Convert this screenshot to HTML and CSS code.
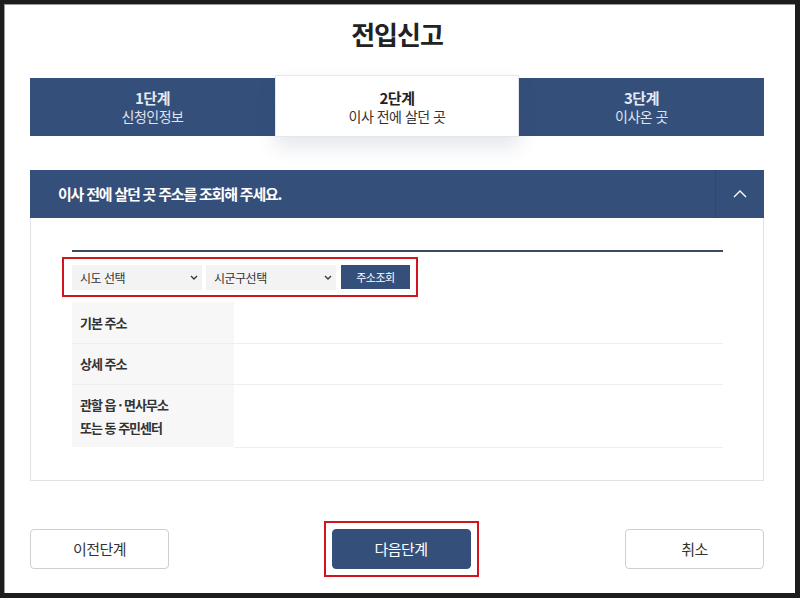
FILE: index.html
```html
<!DOCTYPE html>
<html lang="ko">
  <head>
    <meta charset="UTF-8" />
    <meta name="viewport" content="width=device-width, initial-scale=1.0" />
    <title>전입신고</title>
    <link rel="stylesheet" href="styles.css">
  </head>
  <body>
    <div class="modal">
      <h1 class="title">전입신고</h1>

      <ol class="steps">
        <li class="step">
          <strong>1단계</strong>
          <span>신청인정보</span>
        </li>
        <li class="step active">
          <strong>2단계</strong>
          <span>이사 전에 살던 곳</span>
        </li>
        <li class="step">
          <strong>3단계</strong>
          <span>이사온 곳</span>
        </li>
      </ol>

      <div class="panel">
        <div class="panel-head">
          <h2>이사 전에 살던 곳 주소를 조회해 주세요.</h2>
          <button class="toggle" aria-label="접기">
            <svg width="14" height="8" viewBox="0 0 14 8"><path d="M1 7 L7 1 L13 7" fill="none" stroke="#fff" stroke-width="1.4"/></svg>
          </button>
        </div>
        <div class="panel-body">
          <div class="search-row">
            <div class="select">
              <span>시도 선택</span>
              <svg width="8" height="5" viewBox="0 0 8 5"><path d="M1 1 L4 4 L7 1" fill="none" stroke="#333" stroke-width="1.3"/></svg>
            </div>
            <div class="select">
              <span>시군구선택</span>
              <svg width="8" height="5" viewBox="0 0 8 5"><path d="M1 1 L4 4 L7 1" fill="none" stroke="#333" stroke-width="1.3"/></svg>
            </div>
            <button class="search-btn">주소조회</button>
          </div>

          <table class="addr">
            <tr class="r1">
              <th>기본 주소</th>
              <td></td>
            </tr>
            <tr class="r2">
              <th>상세 주소</th>
              <td></td>
            </tr>
            <tr class="r3">
              <th>관할 읍 · 면사무소<br>또는 동 주민센터</th>
              <td></td>
            </tr>
          </table>
        </div>
      </div>

      <div class="footer">
        <button class="btn">이전단계</button>
        <div class="mark">
          <button class="btn primary">다음단계</button>
        </div>
        <button class="btn">취소</button>
      </div>
    </div>
  </body>
</html>
```

FILE: styles.css
```css
body {
    margin: 0;
    background-color: #1d1d1d;
    font-family: "Noto Sans CJK KR", "Noto Sans", sans-serif;
    color: #333;
}
.modal {
    box-sizing: border-box;
    width: 791px;
    height: 589px;
    margin: 4px 0 0 4px;
    padding: 0 31px 0 25px;
    background-color: #fff;
    border-left: 1px solid #9a9a9a;
    border-top: 1px solid #9a9a9a;
}
.title {
    margin: 0;
    padding-top: 13px;
    height: 58px;
    box-sizing: border-box;
    text-align: center;
    font-size: 26px;
    font-weight: 700;
    color: #222;
    line-height: 32px;
    letter-spacing: -1px;
}
.steps {
    list-style: none;
    margin: 15px 0 0;
    padding: 0;
    display: grid;
    grid-template-columns: 245px 244px 245px;
    height: 58px;
}
.step {
    background-color: #354f7b;
    color: #dfe4ee;
    display: flex;
    flex-direction: column;
    align-items: center;
    justify-content: center;
    line-height: 18px;
    font-size: 14px;
    letter-spacing: -0.5px;
}
.step strong {
    font-size: 15px;
    font-weight: 700;
    color: #e6eaf2;
}
.step.active {
    position: relative;
    background-color: #fff;
    color: #333;
    margin: -3px 0 -1px;
    border: 1px solid #e3e6ec;
    box-shadow: 0 10px 18px rgba(40, 55, 90, 0.12);
    padding-top: 2px;
}
.step.active strong {
    color: #222;
}
.panel {
    margin-top: 34px;
    border: 1px solid #e2e2e2;
    border-top: none;
}
.panel-head {
    display: flex;
    height: 48px;
    background-color: #354f7b;
    margin: 0 -1px;
}
.panel-head h2 {
    flex: 1;
    margin: 0;
    padding-left: 28px;
    font-size: 15px;
    font-weight: 700;
    color: #fff;
    line-height: 48px;
    letter-spacing: -1.2px;
}
.toggle {
    width: 49px;
    border: none;
    border-left: 1px solid #2f4770;
    background: transparent;
    display: flex;
    align-items: center;
    justify-content: center;
    padding: 0;
}
.panel-body {
    padding: 32px 40px 32px 41px;
}
.search-row {
    position: relative;
    display: flex;
    gap: 4px;
    border-top: 2px solid #3b4a63;
    padding-top: 13px;
    padding-bottom: 12px;
}
.search-row::after {
    content: "";
    position: absolute;
    left: -10px;
    top: 5px;
    width: 352px;
    height: 36px;
    border: 2px solid #d1141d;
}
.select {
    display: flex;
    align-items: center;
    justify-content: space-between;
    width: 130px;
    height: 25px;
    box-sizing: border-box;
    padding: 0 4px 0 8px;
    background-color: #f3f3f3;
    font-size: 12px;
    color: #333;
    letter-spacing: -0.5px;
}
.search-btn {
    margin-left: 1px;
    width: 69px;
    height: 24px;
    border: none;
    background-color: #354f7b;
    color: #fff;
    font-family: inherit;
    font-size: 11px;
    letter-spacing: -0.5px;
    padding: 0;
}
.addr {
    width: 100%;
    border-collapse: collapse;
}
.addr th {
    width: 162px;
    background-color: #f7f7f7;
    text-align: left;
    padding: 0 0 0 8px;
    font-size: 13px;
    font-weight: 700;
    color: #333;
    line-height: 23px;
    letter-spacing: -1px;
    box-sizing: border-box;
}
.addr td {
    border-bottom: 1px solid #efefef;
}
.addr tr + tr th,
.addr tr + tr td {
    border-top: 1px solid #efefef;
}
.addr .r1 {
    height: 41px;
}
.addr .r2 {
    height: 41px;
}
.addr .r3 {
    height: 63px;
}
.footer {
    display: flex;
    justify-content: space-between;
    align-items: center;
    margin-top: 40px;
}
.btn {
    width: 139px;
    height: 40px;
    border: 1px solid #cfcfcf;
    border-radius: 4px;
    background-color: #fff;
    font-family: inherit;
    font-size: 15px;
    color: #333;
    letter-spacing: -0.5px;
    padding: 0;
}
.btn.primary {
    background-color: #354f7b;
    border-color: #354f7b;
    color: #fff;
}
.mark {
    border: 2px solid #d1141d;
    padding: 6px;
    margin-left: 8px;
}
```
